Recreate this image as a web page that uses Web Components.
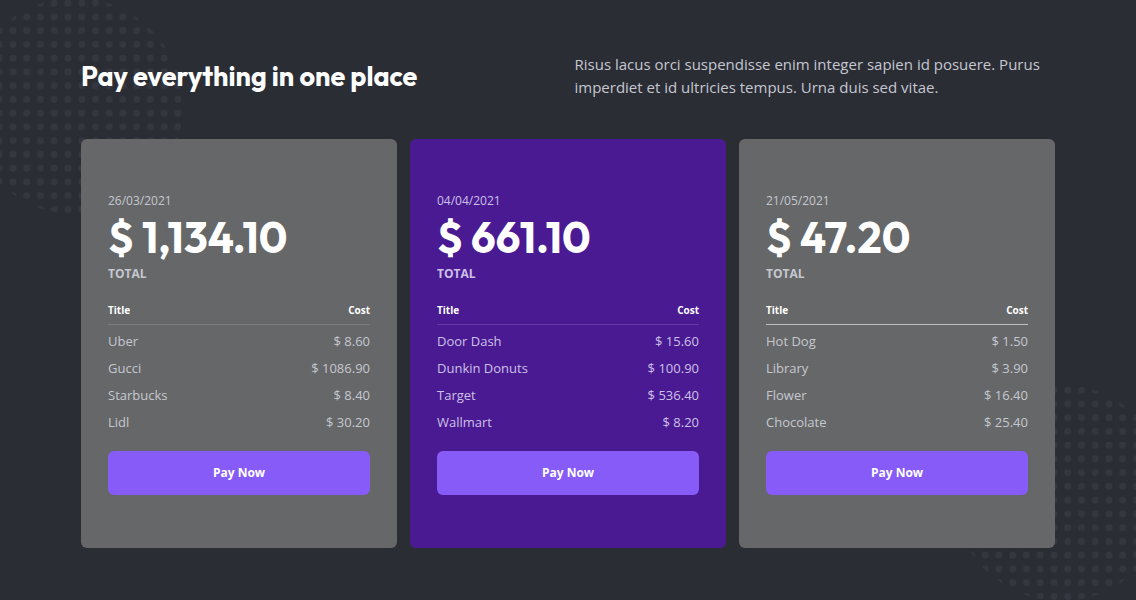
<!DOCTYPE html>
<html lang="en">
<head>
  <meta charset="utf-8">
  <meta name="viewport" content="width=device-width, initial-scale=1">
  <title>Pay everything in one place</title>
  <style>
    body {
      margin: 0;
      background: #2b2d35;
      font-family: 'Open Sans', 'Noto Sans', sans-serif;
      --font-heading: Outfit, Lato, sans-serif;
    }
  </style>
</head>
<body>
  <payment-section>
    <h2 slot="heading">Pay everything in one place</h2>
    <p slot="description">Risus lacus orci suspendisse enim integer sapien id posuere. Purus imperdiet et id ultricies tempus. Urna duis sed vitae.</p>

    <payment-card items='[["Uber", "$ 8.60"], ["Gucci", "$ 1086.90"], ["Starbucks", "$ 8.40"], ["Lidl", "$ 30.20"]]'>
      <span slot="date">26/03/2021</span>
      <span slot="amount">$ 1,134.10</span>
    </payment-card>
    <payment-card class="featured" items='[["Door Dash", "$ 15.60"], ["Dunkin Donuts", "$ 100.90"], ["Target", "$ 536.40"], ["Wallmart", "$ 8.20"]]'>
      <span slot="date">04/04/2021</span>
      <span slot="amount">$ 661.10</span>
    </payment-card>
    <payment-card class="strong-line" items='[["Hot Dog", "$ 1.50"], ["Library", "$ 3.90"], ["Flower", "$ 16.40"], ["Chocolate", "$ 25.40"]]'>
      <span slot="date">21/05/2021</span>
      <span slot="amount">$ 47.20</span>
    </payment-card>
  </payment-section>

  <script>
    class DotCircle extends HTMLElement {
      constructor() {
        super();
        this.attachShadow({ mode: 'open' });
      }

      connectedCallback() {
        this.shadowRoot.innerHTML = `
          <style>
            :host {
              display: block;
              width: 216px;
              height: 216px;
            }

            svg {
              display: block;
              width: 100%;
              height: 100%;
            }
          </style>

          <svg viewBox="0 0 216 216" aria-hidden="true">
            <defs>
              <pattern id="dots" width="13.75" height="13.75" patternUnits="userSpaceOnUse">
                <circle cx="4.7" cy="5.2" r="3.4" fill="#343740" />
              </pattern>
            </defs>
            <circle cx="108" cy="108" r="108" fill="url(#dots)" />
          </svg>
        `;
      }
    }

    class PaymentCard extends HTMLElement {
      constructor() {
        super();
        this.attachShadow({ mode: 'open' });
      }

      connectedCallback() {
        this.render();
      }

      render() {
        const items = JSON.parse(this.getAttribute('items') || '[]');

        this.shadowRoot.innerHTML = `
          <style>
            :host {
              --card-bg: #666768;
              --card-text: #c5c7d0;
              --card-line: #7c7d7f;
              display: block;
              box-sizing: border-box;
              padding: 53px 27px;
              border-radius: 6px;
              background: var(--card-bg);
              color: var(--card-text);
            }

            :host(.featured) {
              --card-bg: #491a92;
              --card-text: #cdc1e8;
              --card-line: #6339a3;
            }

            :host(.strong-line) {
              --card-line: #bfc0c2;
            }

            .date {
              font-size: 12px;
              line-height: 18px;
            }

            .amount {
              color: #fff;
              font-family: var(--font-heading);
              font-size: 43px;
              font-weight: 700;
              line-height: 55px;
            }

            .total {
              font-size: 12px;
              font-weight: 700;
              line-height: 17px;
            }

            table {
              width: 100%;
              margin-top: 18px;
              border-collapse: separate;
              border-spacing: 0;
              font-size: 13px;
              line-height: 27px;
            }

            th,
            td {
              padding: 0;
              text-align: left;
            }

            th {
              padding-bottom: 4px;
              border-bottom: 1px solid var(--card-line);
              color: #fff;
              font-size: 10px;
              font-weight: 700;
              line-height: 20px;
            }

            tbody tr:first-child td {
              padding-top: 3px;
            }

            th:last-child,
            td:last-child {
              text-align: right;
            }

            button {
              display: block;
              width: 100%;
              margin-top: 15px;
              padding: 12px;
              border: 0;
              border-radius: 6px;
              background: #875bf7;
              color: #fff;
              font-family: inherit;
              font-size: 12px;
              font-weight: 700;
              line-height: 20px;
              cursor: pointer;
            }

            button:hover {
              background: #7a4af0;
            }
          </style>

          <div class="date"><slot name="date"></slot></div>
          <div class="amount"><slot name="amount"></slot></div>
          <div class="total">TOTAL</div>
          <table>
            <thead>
              <tr><th scope="col">Title</th><th scope="col">Cost</th></tr>
            </thead>
            <tbody>
              ${items.map(([title, cost]) => `<tr><td>${title}</td><td>${cost}</td></tr>`).join('')}
            </tbody>
          </table>
          <button type="button">Pay Now</button>
        `;
      }
    }

    class PaymentSection extends HTMLElement {
      constructor() {
        super();
        this.attachShadow({ mode: 'open' });
      }

      connectedCallback() {
        this.shadowRoot.innerHTML = `
          <style>
            :host {
              display: block;
              position: relative;
              box-sizing: border-box;
              min-height: 100vh;
              padding: 53px 32px 52px;
              overflow: hidden;
            }

            /* Decorative circles behind the content */
            dot-circle {
              position: absolute;
            }

            .top {
              top: -2px;
              left: -33px;
            }

            .bottom {
              right: -33px;
              bottom: -1px;
            }

            .content {
              position: relative;
              max-width: 974px;
              margin: 0 auto;
            }

            header {
              display: grid;
              grid-template-columns: 1fr 1fr;
              align-items: center;
              gap: 13px;
              margin-bottom: 40px;
            }

            ::slotted(h2) {
              margin: 0;
              color: #fff;
              font-family: var(--font-heading);
              font-size: 27px;
              font-weight: 700;
              line-height: 36px;
            }

            ::slotted(p) {
              margin: 0;
              color: #c5c7d0;
              font-size: 15px;
              line-height: 23px;
            }

            .cards {
              display: grid;
              grid-template-columns: repeat(3, 1fr);
              gap: 13px;
            }

            @media (max-width: 800px) {
              header,
              .cards {
                grid-template-columns: 1fr;
              }
            }
          </style>

          <dot-circle class="top"></dot-circle>
          <dot-circle class="bottom"></dot-circle>
          <div class="content">
            <header>
              <slot name="heading"></slot>
              <slot name="description"></slot>
            </header>
            <div class="cards"><slot></slot></div>
          </div>
        `;
      }
    }

    customElements.define('dot-circle', DotCircle);
    customElements.define('payment-card', PaymentCard);
    customElements.define('payment-section', PaymentSection);
  </script>
</body>
</html>
